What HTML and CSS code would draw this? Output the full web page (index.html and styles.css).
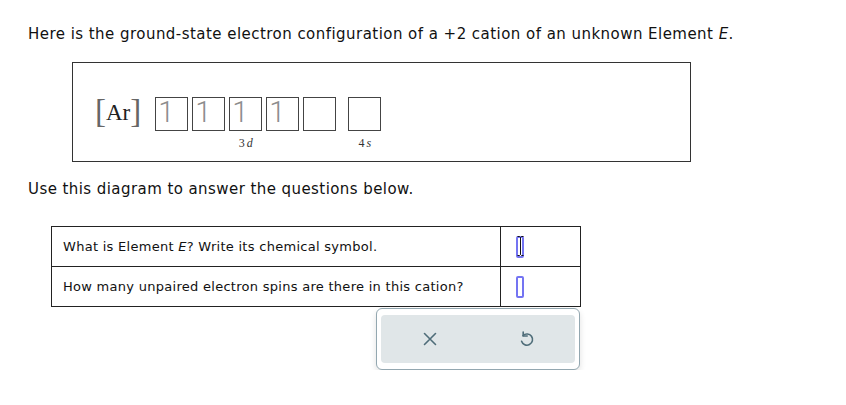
FILE: index.html
```html
<!DOCTYPE html>
<html>
<head>
<meta charset="utf-8">
<link rel="stylesheet" href="styles.css">
</head>
<body>
<div class="page">
  <p class="intro">Here is the ground-state electron configuration of a +2 cation of an unknown Element <i>E</i>.</p>
  <div class="diagram">
    <div class="config">
      <div class="core"><span class="br">[</span>Ar<span class="br">]</span></div>
      <div class="sub">
        <div class="boxes">
          <div class="orb">1</div><div class="orb">1</div><div class="orb">1</div><div class="orb">1</div><div class="orb"></div>
        </div>
        <div class="lbl">3<i>d</i></div>
      </div>
      <div class="sub">
        <div class="boxes"><div class="orb"></div></div>
        <div class="lbl">4<i>s</i></div>
      </div>
    </div>
  </div>
  <p class="use">Use this diagram to answer the questions below.</p>
  <table class="qa">
    <tr>
      <td class="q">What is Element <i>E</i>? Write its chemical symbol.</td>
      <td class="a"><span class="inp"><svg class="ibeam" width="9" height="22" viewBox="0 0 9 22"><path d="M1.5 1.5h2l1 1 1-1h2M4.5 2.5v17M1.5 20.5h2l1-1 1 1h2" fill="none" stroke="#111" stroke-width="1"/></svg></span></td>
    </tr>
    <tr>
      <td class="q">How many unpaired electron spins are there in this cation?</td>
      <td class="a"><span class="inp"></span></td>
    </tr>
  </table>
  <div class="actions">
    <div class="inner">
      <button class="btn" aria-label="clear"><svg width="14" height="14" viewBox="0 0 14 14"><path d="M1.5 1.5l11 11M12.5 1.5l-11 11" stroke="#4f6d79" stroke-width="1.6" fill="none" stroke-linecap="round"/></svg></button>
      <button class="btn" aria-label="undo"><svg width="16" height="17" viewBox="0 0 16 17"><path d="M4 4.6A5.6 5.6 0 1 1 2.6 10.2" stroke="#4f6d79" stroke-width="1.6" fill="none" stroke-linecap="round"/><path d="M4.2 1v4h4" stroke="#4f6d79" stroke-width="1.6" fill="none" stroke-linecap="round" stroke-linejoin="round"/></svg></button>
    </div>
  </div>
</div>
</body>
</html>
```

FILE: styles.css
```css
html, body {
  margin: 0;
  padding: 0;
  background: #ffffff;
}
body {
  font-family: "DejaVu Sans", Verdana, sans-serif;
  color: #111;
}
.page {
  padding: 0 28px;
}
.intro {
  margin: 0;
  padding-top: 24px;
  font-size: 15px;
  line-height: 20px;
  letter-spacing: 0.46px;
}
.diagram {
  box-sizing: border-box;
  margin-top: 18px;
  margin-left: 44px;
  width: 619px;
  height: 100px;
  border: 1px solid #333;
}
.config {
  display: flex;
  align-items: flex-start;
  padding-left: 22px;
  padding-top: 34px;
}
.core {
  font-family: "Liberation Serif", "Times New Roman", serif;
  font-size: 23px;
  line-height: 32px;
  color: #222;
  margin-right: 14px;
  display: flex;
  align-items: center;
}
.core .br {
  font-size: 33px;
  color: #666;
  position: relative;
  top: -2px;
}
.sub {
  display: flex;
  flex-direction: column;
  align-items: center;
  margin-right: 12px;
}
.boxes {
  display: flex;
  gap: 4px;
}
.orb {
  box-sizing: border-box;
  width: 33px;
  height: 34px;
  border: 1px solid #444;
  font-family: Roboto, "Liberation Sans", Arial, sans-serif;
  font-weight: 300;
  font-size: 29px;
  line-height: 28px;
  color: #8c8c8c;
  padding-left: 2px;
}
.lbl {
  font-family: "Liberation Serif", "Times New Roman", serif;
  font-size: 12px;
  line-height: 14px;
  color: #333;
  margin-top: 5px;
  letter-spacing: 2px;
  padding-left: 2px;
}
.use {
  margin: 17px 0 0;
  font-size: 15px;
  line-height: 20px;
  letter-spacing: 0.43px;
}
.qa {
  margin-top: 27px;
  margin-left: 23px;
  border-collapse: collapse;
  width: 530px;
}
.qa td {
  border: 1px solid #222;
  height: 39px;
  padding: 0;
  font-size: 13px;
  letter-spacing: 0.28px;
}
.qa td.q {
  width: 437px;
  padding-left: 11px;
}
.qa td.a {
  padding-left: 15px;
}
.inp {
  position: relative;
  display: block;
  box-sizing: border-box;
  width: 8px;
  height: 22px;
  border: 2px solid #7474f2;
  border-radius: 2px;
}
.ibeam {
  position: absolute;
  left: -2.5px;
  top: -3px;
}
.actions {
  box-sizing: border-box;
  margin-left: 348px;
  margin-top: 1px;
  width: 204px;
  height: 62px;
  border: 1px solid #93a7b0;
  border-radius: 6px;
  padding: 6px 4px;
  background: #fff;
  box-shadow: 0 3px 6px rgba(0,0,0,0.12);
}
.inner {
  display: flex;
  height: 100%;
  background: #e0e6e8;
  border-radius: 4px;
}
.btn {
  flex: 1;
  border: 0;
  background: transparent;
  display: flex;
  align-items: center;
  justify-content: center;
  padding: 0;
}
```
